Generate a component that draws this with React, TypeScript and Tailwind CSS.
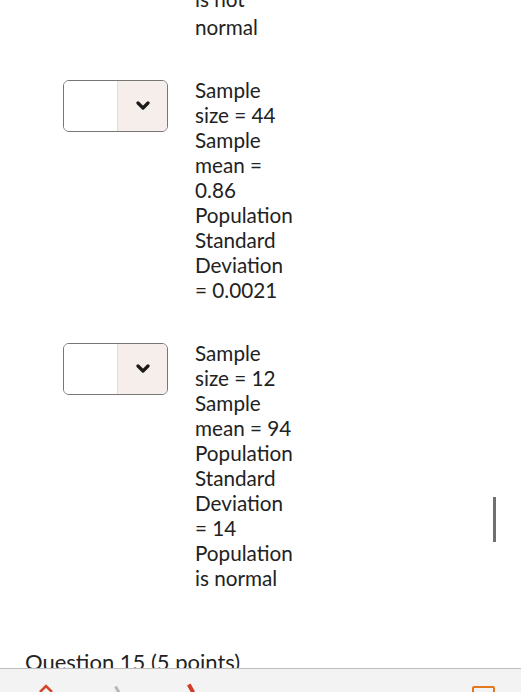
export default function App() {
  const blocks = [
    ["Sample size = 44", "Sample mean = 0.86", "Population Standard Deviation = 0.0021"],
    ["Sample size = 12", "Sample mean = 94", "Population Standard Deviation = 14", "Population is normal"],
  ];

  return (
    <div className="relative flex h-[692px] w-[521px] flex-col overflow-hidden bg-white font-['Lato',sans-serif] text-[#222]">
      {/* scrolled content */}
      <div className="min-h-0 flex-1 overflow-hidden">
        <div className="-mt-[13px] pl-[63px]">
          {/* tail of previous row */}
          <div className="ml-[132px] w-[100px] text-[20.7px] leading-[25px]">
            <div>is not</div>
            <div className="mt-[3px]">normal</div>
          </div>

          {blocks.map((lines, i) => (
            <div key={i} className="mt-[38px] flex items-start">
              <div className="mt-[2px] flex h-[52px] w-[105px] overflow-hidden rounded-[6px] border border-[#767676]">
                <div className="w-[53px] bg-white"></div>
                <div className="flex flex-1 items-center justify-center border-l border-[#e4dcd8] bg-[#f5eeeb]">
                  <svg width="14" height="10" viewBox="0 0 14 10">
                    <path d="M2 2 L7 7 L12 2" fill="none" stroke="#1a1a1a" strokeWidth="3.2" strokeLinecap="round" strokeLinejoin="round" />
                  </svg>
                </div>
              </div>
              <div className="ml-[27px] w-[100px] text-[20.7px] leading-[25px]">
                {lines.map((l, j) => (
                  <div key={j}>{l}</div>
                ))}
              </div>
            </div>
          ))}

          <div className="-ml-[38px] mt-[58px] whitespace-nowrap text-[22px] leading-[25px]">Question 15 (5 points)</div>
        </div>
      </div>

      {/* scrollbar thumb */}
      <div className="absolute left-[493px] top-[497px] h-[45px] w-[3px] bg-[#707070]"></div>

      {/* bottom toolbar */}
      <div className="flex h-[24px] shrink-0 items-start overflow-hidden border-t border-[#bdbdbd] bg-[#f3f3f3] pl-[38px] pr-[26px] pt-[14px]">
        <svg width="16" height="10" viewBox="0 0 16 10">
          <path d="M2 9 L8 3 L14 9" fill="none" stroke="#d2462a" strokeWidth="2.5" />
        </svg>
        <div className="ml-[62px] mt-[3px] h-[8px] w-[3px] rotate-[-30deg] bg-[#b8b8b8]"></div>
        <div className="ml-[70px] mt-[1px] h-[9px] w-[4px] rotate-[-30deg] bg-[#d23a2a]"></div>
        <div className="ml-auto mt-[3px] h-[12px] w-[23px] rounded-[2px] border-2 border-[#e07a1c]"></div>
      </div>
    </div>
  );
}
